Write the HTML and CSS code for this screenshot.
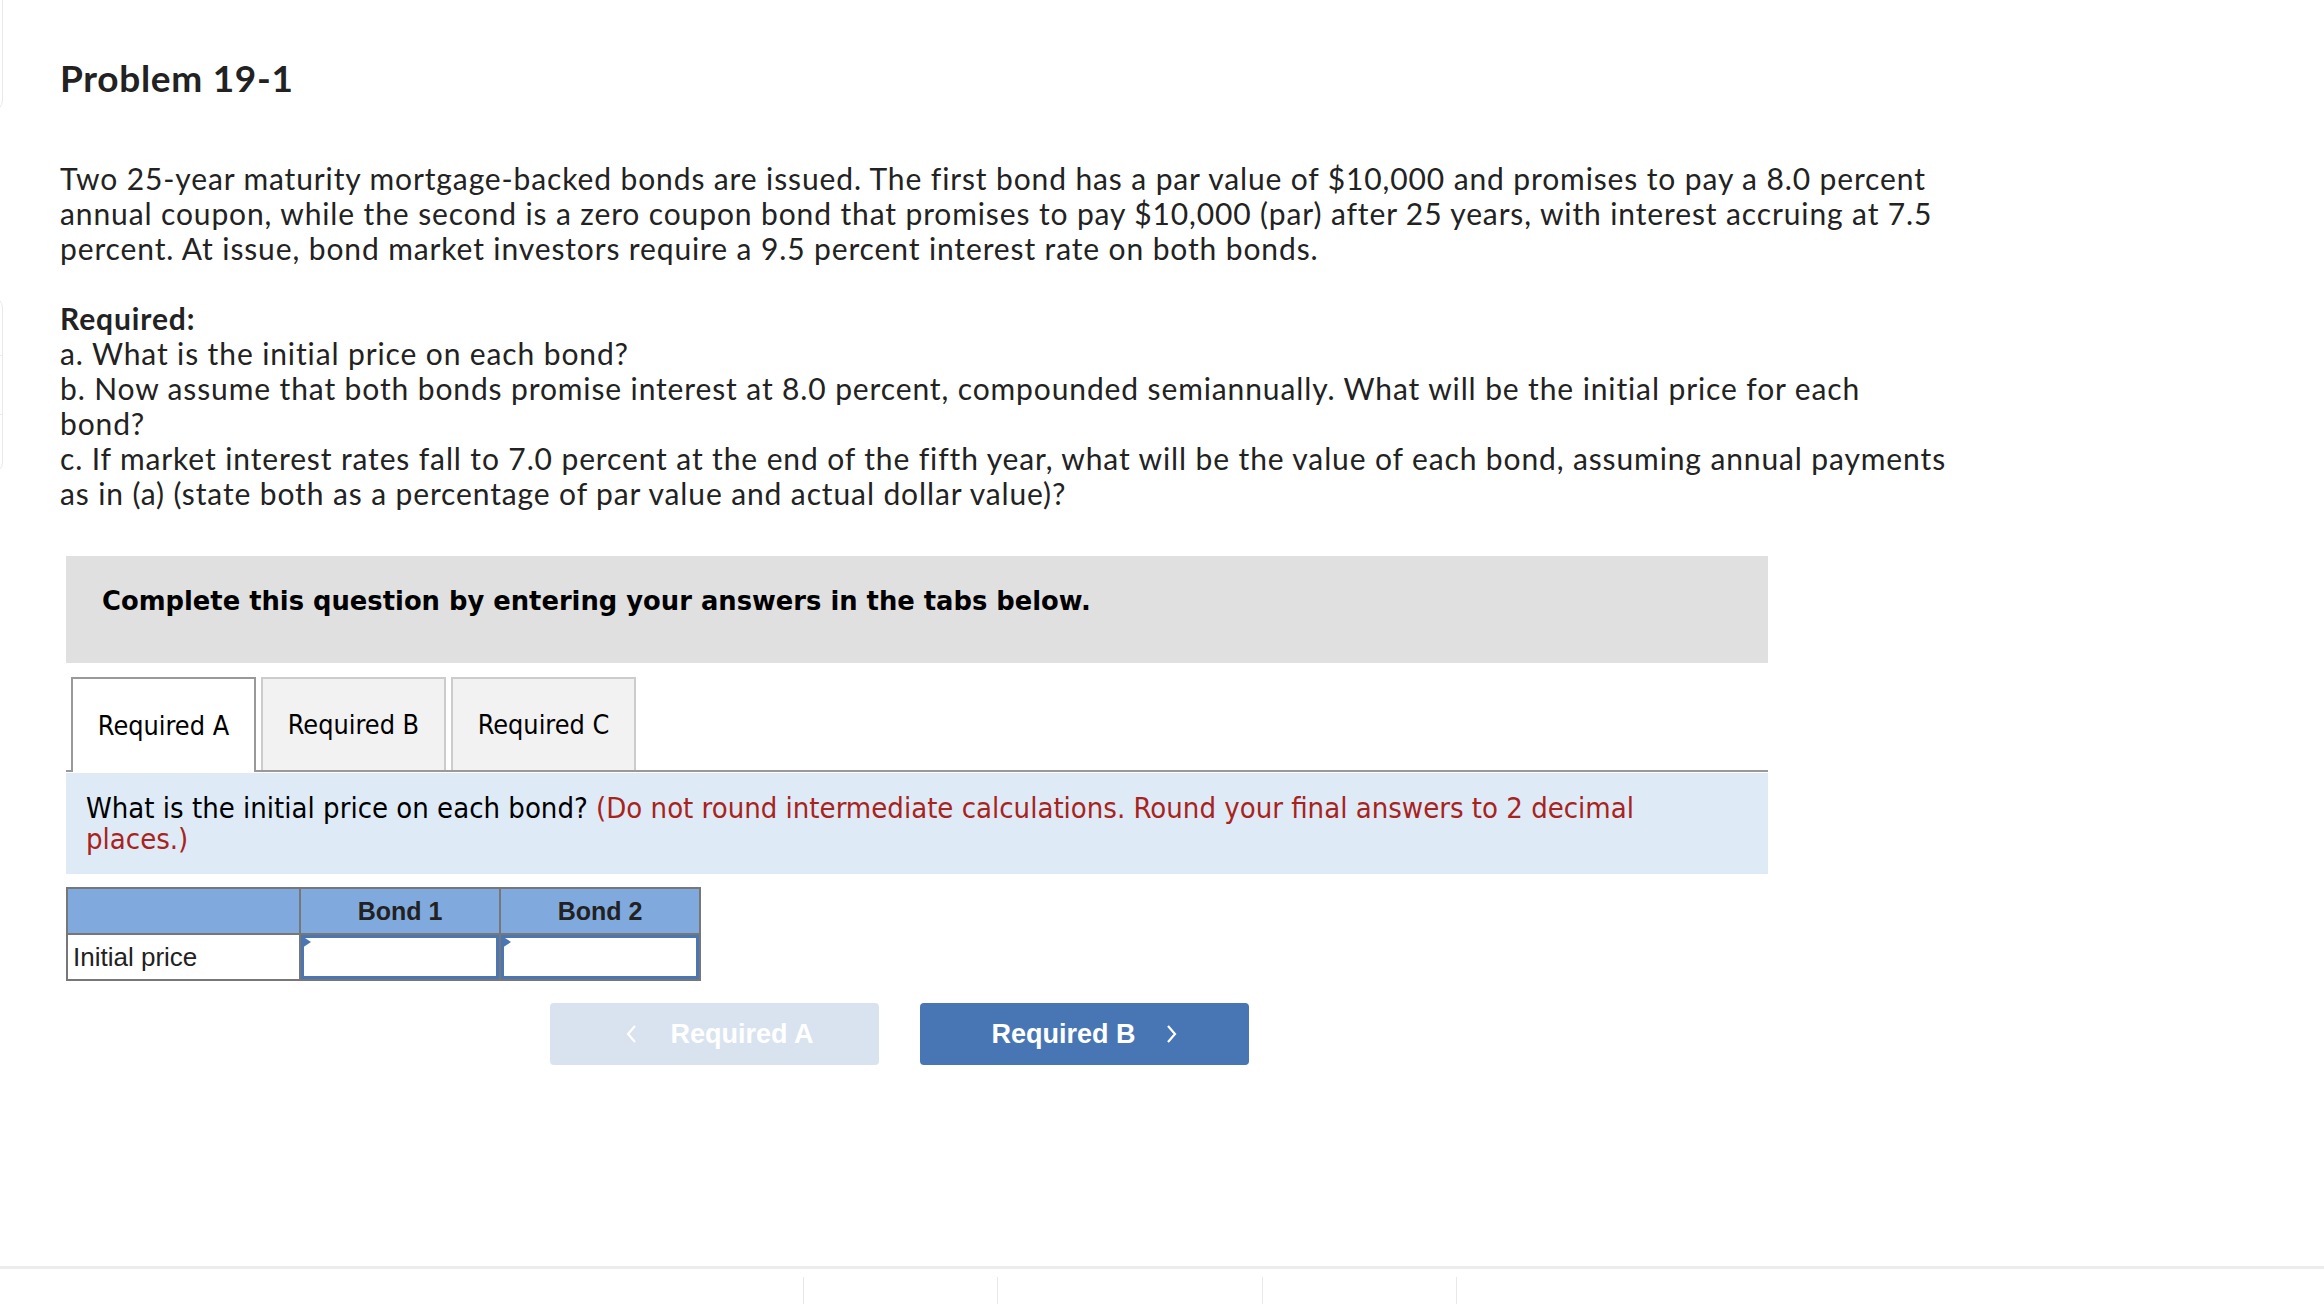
FILE: index.html
```html
<!DOCTYPE html>
<html lang="en">
<head>
<meta charset="utf-8">
<title>Problem 19-1</title>
<link rel="stylesheet" href="styles.css">
</head>
<body>
<div class="edge edge-top" aria-hidden="true"></div>
<div class="edge edge-mid" aria-hidden="true"><span class="edge-rule"></span><span class="edge-rule"></span></div>

<main class="page">
  <h1 class="title">Problem 19-1</h1>
  <p class="text">Two 25-year maturity mortgage-backed bonds are issued. The first bond has a par value of $10,000 and promises to pay a 8.0 percent<br>
    annual coupon, while the second is a zero coupon bond that promises to pay $10,000 (par) after 25 years, with interest accruing at 7.5<br>
    percent. At issue, bond market investors require a 9.5 percent interest rate on both bonds.</p>
  <div class="text">
    <strong>Required:</strong><br>
    a. What is the initial price on each bond?<br>
    b. Now assume that both bonds promise interest at 8.0 percent, compounded semiannually. What will be the initial price for each<br>
    bond?<br>
    c. If market interest rates fall to 7.0 percent at the end of the fifth year, what will be the value of each bond, assuming annual payments<br>
    as in (a) (state both as a percentage of par value and actual dollar value)?
  </div>

  <section class="task">
    <div class="banner">Complete this question by entering your answers in the tabs below.</div>

    <div class="tabs">
      <div class="tab tab-active">Required A</div>
      <div class="tab">Required B</div>
      <div class="tab">Required C</div>
    </div>

    <div class="prompt">What is the initial price on each bond? <span class="hint">(Do not round intermediate calculations. Round your final answers to 2 decimal<br>places.)</span></div>

    <table class="grid">
      <thead>
        <tr>
          <th class="col-label"></th>
          <th class="col-val">Bond 1</th>
          <th class="col-val">Bond 2</th>
        </tr>
      </thead>
      <tbody>
        <tr>
          <td class="row-label">Initial price</td>
          <td class="cell-input"><div class="field"></div></td>
          <td class="cell-input"><div class="field"></div></td>
        </tr>
      </tbody>
    </table>

    <div class="nav">
      <button class="btn btn-prev" type="button">
        <svg class="chev" viewBox="0 0 12 20" width="12" height="20"><path d="M10 2 L3 10 L10 18" fill="none" stroke="currentColor" stroke-width="2.2"/></svg>
        <span>Required A</span>
      </button>
      <button class="btn btn-next" type="button">
        <span>Required B</span>
        <svg class="chev" viewBox="0 0 12 20" width="12" height="20"><path d="M2 2 L9 10 L2 18" fill="none" stroke="currentColor" stroke-width="2.2"/></svg>
      </button>
    </div>
  </section>
</main>

<footer class="footer">
  <div class="foot-cell foot-first"></div>
  <div class="foot-cell foot-a"></div>
  <div class="foot-cell foot-b"></div>
  <div class="foot-cell foot-c"></div>
  <div class="foot-cell foot-rest"></div>
</footer>
</body>
</html>
```
FILE: styles.css
```css
html, body {
  margin: 0;
  padding: 0;
}

body {
  position: relative;
  min-height: 100vh;
  display: flex;
  flex-direction: column;
  background: #ffffff;
  color: #222222;
  font-family: Lato, "Open Sans", sans-serif;
  overflow: hidden;
}

/* faint edges of the collapsed side panel */
.edge {
  position: absolute;
  left: -20px;
  width: 23px;
  border: 1px solid #e9e9e9;
  border-radius: 0 0 12px 0;
  box-sizing: border-box;
}
.edge-top {
  top: -2px;
  height: 114px;
}
.edge-mid {
  top: 296px;
  height: 178px;
  border-radius: 0 12px 12px 0;
  display: flex;
  flex-direction: column;
  justify-content: space-evenly;
}
.edge-rule {
  display: block;
  height: 1px;
  background: #ececec;
}

.page {
  padding: 56px 0 0 60px;
  width: 2000px;
}

.title {
  margin: 0 0 62px;
  font-size: 37px;
  line-height: 43px;
  font-weight: 700;
  letter-spacing: 0.7px;
  color: #222222;
}

.text {
  margin: 0 0 35px;
  font-size: 30px;
  line-height: 35px;
  letter-spacing: 0.88px;
  color: #222222;
}

.text strong {
  font-weight: 700;
}

.task {
  margin: 45px 0 0 6px;
  width: 1702px;
}

.banner {
  background: #e0e0e0;
  padding: 30px 36px 47px;
  font-family: "DejaVu Sans", Verdana, sans-serif;
  font-weight: 700;
  font-size: 25.8px;
  line-height: 30px;
  color: #000000;
}

.tabs {
  display: flex;
  gap: 5px;
  margin-top: 14px;
  padding-left: 5px;
  border-bottom: 2px solid #999999;
}

.tab {
  box-sizing: border-box;
  width: 185px;
  height: 93px;
  display: flex;
  align-items: center;
  justify-content: center;
  border: 2px solid #cccccc;
  border-bottom: none;
  background: #f2f2f2;
  font-family: "DejaVu Sans Condensed", "DejaVu Sans", sans-serif;
  font-size: 26.8px;
  color: #000000;
}

.tab-active {
  height: 95px;
  margin-bottom: -2px;
  background: #ffffff;
  border-color: #999999;
}

.prompt {
  margin-top: 1px;
  background: #dfeaf7;
  padding: 20px 20px 19px 20px;
  font-family: "DejaVu Sans Condensed", "DejaVu Sans", sans-serif;
  font-size: 29px;
  line-height: 31px;
  color: #000000;
}

.hint {
  color: #a8231c;
}

.grid {
  margin-top: 13px;
  border-collapse: collapse;
  font-family: "Liberation Sans", Arial, sans-serif;
  font-size: 25px;
}

.grid th,
.grid td {
  border: 2px solid #777777;
  height: 44px;
  padding: 0;
}

.grid th {
  background: #80aade;
  font-weight: 700;
  color: #222222;
  text-align: center;
}

.col-label {
  width: 231px;
}

.col-val {
  width: 198px;
}

.row-label {
  padding-left: 5px !important;
  text-align: left;
  font-size: 26px;
  color: #222222;
}

.cell-input {
  position: relative;
}

.field {
  box-sizing: border-box;
  height: 44px;
  border: 3px solid #4a76b3;
  background: #ffffff;
}

.cell-input::before {
  content: "";
  position: absolute;
  left: 1px;
  top: 1px;
  border-top: 6px solid transparent;
  border-bottom: 6px solid transparent;
  border-left: 9px solid #4a76b3;
}

.nav {
  display: flex;
  gap: 41px;
  margin-top: 22px;
  padding-left: 484px;
}

.btn {
  box-sizing: border-box;
  width: 329px;
  height: 62px;
  display: flex;
  align-items: center;
  justify-content: center;
  gap: 26px;
  border: none;
  border-radius: 4px;
  color: #ffffff;
  font-family: "Liberation Sans", Arial, sans-serif;
  font-weight: 700;
  font-size: 27px;
}

.btn-prev {
  background: #d9e3ef;
  gap: 33px;
  padding-left: 16px;
}

.btn-next {
  background: #4876b4;
  gap: 30px;
}

.chev {
  display: block;
}

.footer {
  margin-top: auto;
  height: 38px;
  box-sizing: border-box;
  border-top: 3px solid #ececec;
  padding-top: 8px;
  display: flex;
}

.foot-cell {
  height: 100%;
}

.foot-first {
  width: 803px;
}

.foot-a,
.foot-b,
.foot-c,
.foot-rest {
  border-left: 1px solid #e8e8e8;
}

.foot-a {
  width: 193px;
}

.foot-b {
  width: 264px;
}

.foot-c {
  width: 193px;
}

.foot-rest {
  flex: 1;
}
```
